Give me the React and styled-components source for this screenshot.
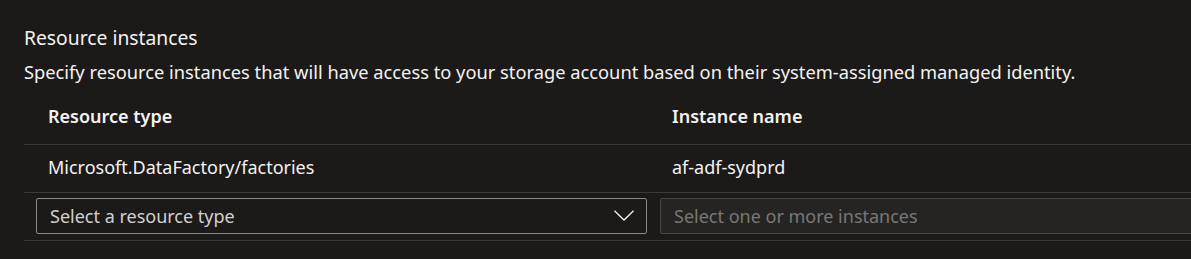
import React from "react";
import styled, { createGlobalStyle } from "styled-components";

const GlobalStyle = createGlobalStyle`
  html, body {
    margin: 0;
    padding: 0;
    background: #1b1a19;
    overflow: hidden;
  }
  body {
    font-family: "Noto Sans", "Open Sans", sans-serif;
    color: #f3f2f1;
  }
  * { box-sizing: border-box; }
`;

const Page = styled.div`
  width: 1191px;
  height: 259px;
  overflow: hidden;
  background: #1b1a19;
  padding: 26px 0 0 24px;
`;

const Title = styled.div`
  font-size: 19.3px;
  line-height: 24px;
  color: #f3f2f1;
`;

const Description = styled.div`
  margin-top: 10px;
  font-size: 18.3px;
  line-height: 24px;
  color: #f3f2f1;
  white-space: nowrap;
`;

const Table = styled.div`
  margin-top: 4px;
  width: 1248px;
  display: grid;
  grid-template-columns: 624px 624px;
`;

const HeaderCell = styled.div`
  height: 57px;
  display: flex;
  align-items: center;
  padding-left: 24px;
  font-size: 18px;
  font-weight: 600;
  color: #f3f2f1;
  border-bottom: 1px solid #3b3a39;
`;

const Cell = styled.div`
  height: 48px;
  display: flex;
  align-items: center;
  padding: 0 0 4px 24px;
  font-size: 18px;
  color: #f3f2f1;
  border-bottom: 1px solid #3b3a39;
`;

const InputCell = styled.div`
  height: 48px;
  display: flex;
  align-items: flex-start;
  padding: 5px 1px 0 12px;
  border-bottom: 1px solid #3b3a39;
`;

const Field = styled.div`
  flex: 1;
  height: 36px;
  display: flex;
  align-items: center;
  justify-content: space-between;
  padding: 0 12px 1px 13px;
  border-radius: 2px;
  border: 1px solid ${(p) => (p.$disabled ? "#484644" : "#8a8886")};
  background: ${(p) => (p.$disabled ? "#252423" : "#1b1a19")};
  color: ${(p) => (p.$disabled ? "#797775" : "#d2d0ce")};
  font-size: 18px;
`;

const Chevron = () => (
  <svg width="20" height="11" viewBox="0 0 20 11" fill="none">
    <path d="M0.5 0.8 L10 10 L19.5 0.8" stroke="#f3f2f1" strokeWidth="1.3" />
  </svg>
);

export default function App() {
  return (
    <>
      <GlobalStyle />
      <Page>
        <Title>Resource instances</Title>
        <Description>
          Specify resource instances that will have access to your storage account based on their system-assigned managed identity.
        </Description>
        <Table>
          <HeaderCell>Resource type</HeaderCell>
          <HeaderCell>Instance name</HeaderCell>
          <Cell>Microsoft.DataFactory/factories</Cell>
          <Cell>af-adf-sydprd</Cell>
          <InputCell>
            <Field>
              <span>Select a resource type</span>
              <Chevron />
            </Field>
          </InputCell>
          <InputCell>
            <Field $disabled>
              <span>Select one or more instances</span>
            </Field>
          </InputCell>
        </Table>
      </Page>
    </>
  );
}
